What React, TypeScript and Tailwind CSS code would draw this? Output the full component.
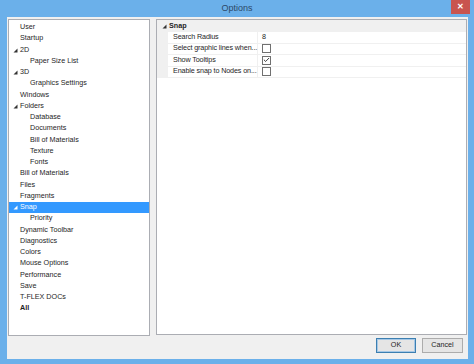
import { Check } from "lucide-react";

const treeItems = [
    { label: "User", level: 0 },
    { label: "Startup", level: 0 },
    { label: "2D", level: 0, open: true },
    { label: "Paper Size List", level: 1 },
    { label: "3D", level: 0, open: true },
    { label: "Graphics Settings", level: 1 },
    { label: "Windows", level: 0 },
    { label: "Folders", level: 0, open: true },
    { label: "Database", level: 1 },
    { label: "Documents", level: 1 },
    { label: "Bill of Materials", level: 1 },
    { label: "Texture", level: 1 },
    { label: "Fonts", level: 1 },
    { label: "Bill of Materials", level: 0 },
    { label: "Files", level: 0 },
    { label: "Fragments", level: 0 },
    { label: "Snap", level: 0, open: true, selected: true },
    { label: "Priority", level: 1 },
    { label: "Dynamic Toolbar", level: 0 },
    { label: "Diagnostics", level: 0 },
    { label: "Colors", level: 0 },
    { label: "Mouse Options", level: 0 },
    { label: "Performance", level: 0 },
    { label: "Save", level: 0 },
    { label: "T-FLEX DOCs", level: 0 },
    { label: "All", level: 0, bold: true },
];

const props = [
    { name: "Search Radius", value: "8" },
    { name: "Select graphic lines when...", check: false },
    { name: "Show Tooltips", check: true },
    { name: "Enable snap to Nodes on...", check: false },
];

function Arrow({ white }: { white?: boolean }) {
    return (
        <svg width="5" height="5" viewBox="0 0 5 5" className="shrink-0">
            <polygon points="4.5,0.5 4.5,4.5 0.5,4.5" fill={white ? "#ffffff" : "#333333"} />
        </svg>
    );
}

function CheckBox({ checked }: { checked?: boolean }) {
    return (
        <div className="w-[9px] h-[9px] border border-[#707070] bg-white flex items-center justify-center">
            {checked && <Check size={8} strokeWidth={3} className="text-[#222]" />}
        </div>
    );
}

export default function App() {
    return (
        <div className="w-[474px] h-[364px] bg-[#6bb0ea] flex flex-col font-['Liberation_Sans',sans-serif] text-[7.2px] text-[#1e1e1e] overflow-hidden">
            {/* title bar */}
            <div className="relative h-[17px] flex items-center justify-center">
                <span className="text-[9px] text-[#2c4868]">Options</span>
                <div className="absolute right-[4px] top-0 w-[19px] h-[14px] bg-[#c9544f] flex items-center justify-center">
                    <span className="text-white text-[8px] font-bold leading-none">✕</span>
                </div>
            </div>

            <div className="mx-[7px] mr-[6px] h-[342px] bg-[#f0f0f0] flex flex-col">
                <div className="flex pt-[2px] pl-[1px] gap-[6px]">
                    {/* tree */}
                    <div className="w-[142px] h-[317px] bg-white border border-[#abadb3] pt-[2px]">
                        {treeItems.map((item, i) => (
                            <div
                                key={i}
                                className={
                                    "h-[11.25px] flex items-center whitespace-nowrap " +
                                    (item.selected ? "bg-[#3399ff] text-white" : "")
                                }
                            >
                                <div className="w-[11px] pl-[2px] flex justify-center">
                                    {item.open && <Arrow white={item.selected} />}
                                </div>
                                <span
                                    className={
                                        (item.level === 1 ? "pl-[10px] " : "") +
                                        (item.bold ? "font-bold" : "")
                                    }
                                >
                                    {item.label}
                                </span>
                            </div>
                        ))}
                    </div>

                    {/* property grid */}
                    <div className="w-[311px] h-[316px] bg-white border border-[#abadb3]">
                        <div className="h-[12px] bg-[#f0f0f0] flex items-center font-bold">
                            <div className="w-[11px] flex justify-center pl-[3px]">
                                <Arrow />
                            </div>
                            <span className="pl-[1px]">Snap</span>
                        </div>
                        {props.map((p, i) => (
                            <div key={i} className="h-[11.5px] flex">
                                <div className="w-[11px] bg-[#f0f0f0]" />
                                <div className="w-[90px] flex items-center pl-[5px] border-b border-r border-[#f0f0f0] whitespace-nowrap tracking-[-0.12px]">
                                    {p.name}
                                </div>
                                <div className="flex-1 flex items-center pl-[4px] border-b border-[#f0f0f0]">
                                    {p.value !== undefined ? p.value : <CheckBox checked={p.check} />}
                                </div>
                            </div>
                        ))}
                    </div>
                </div>

                {/* buttons */}
                <div className="flex justify-end gap-[6px] pr-[5px] pt-[2px]">
                    <button className="w-[40px] h-[15px] bg-[#e5e5e5] border border-[#3c7fb1] shadow-[inset_0_0_0_1px_#a6c8e6] text-[7.2px]">
                        OK
                    </button>
                    <button className="w-[41px] h-[15px] bg-[#e5e5e5] border border-[#acacac] text-[7.2px]">
                        Cancel
                    </button>
                </div>
            </div>
        </div>
    );
}
